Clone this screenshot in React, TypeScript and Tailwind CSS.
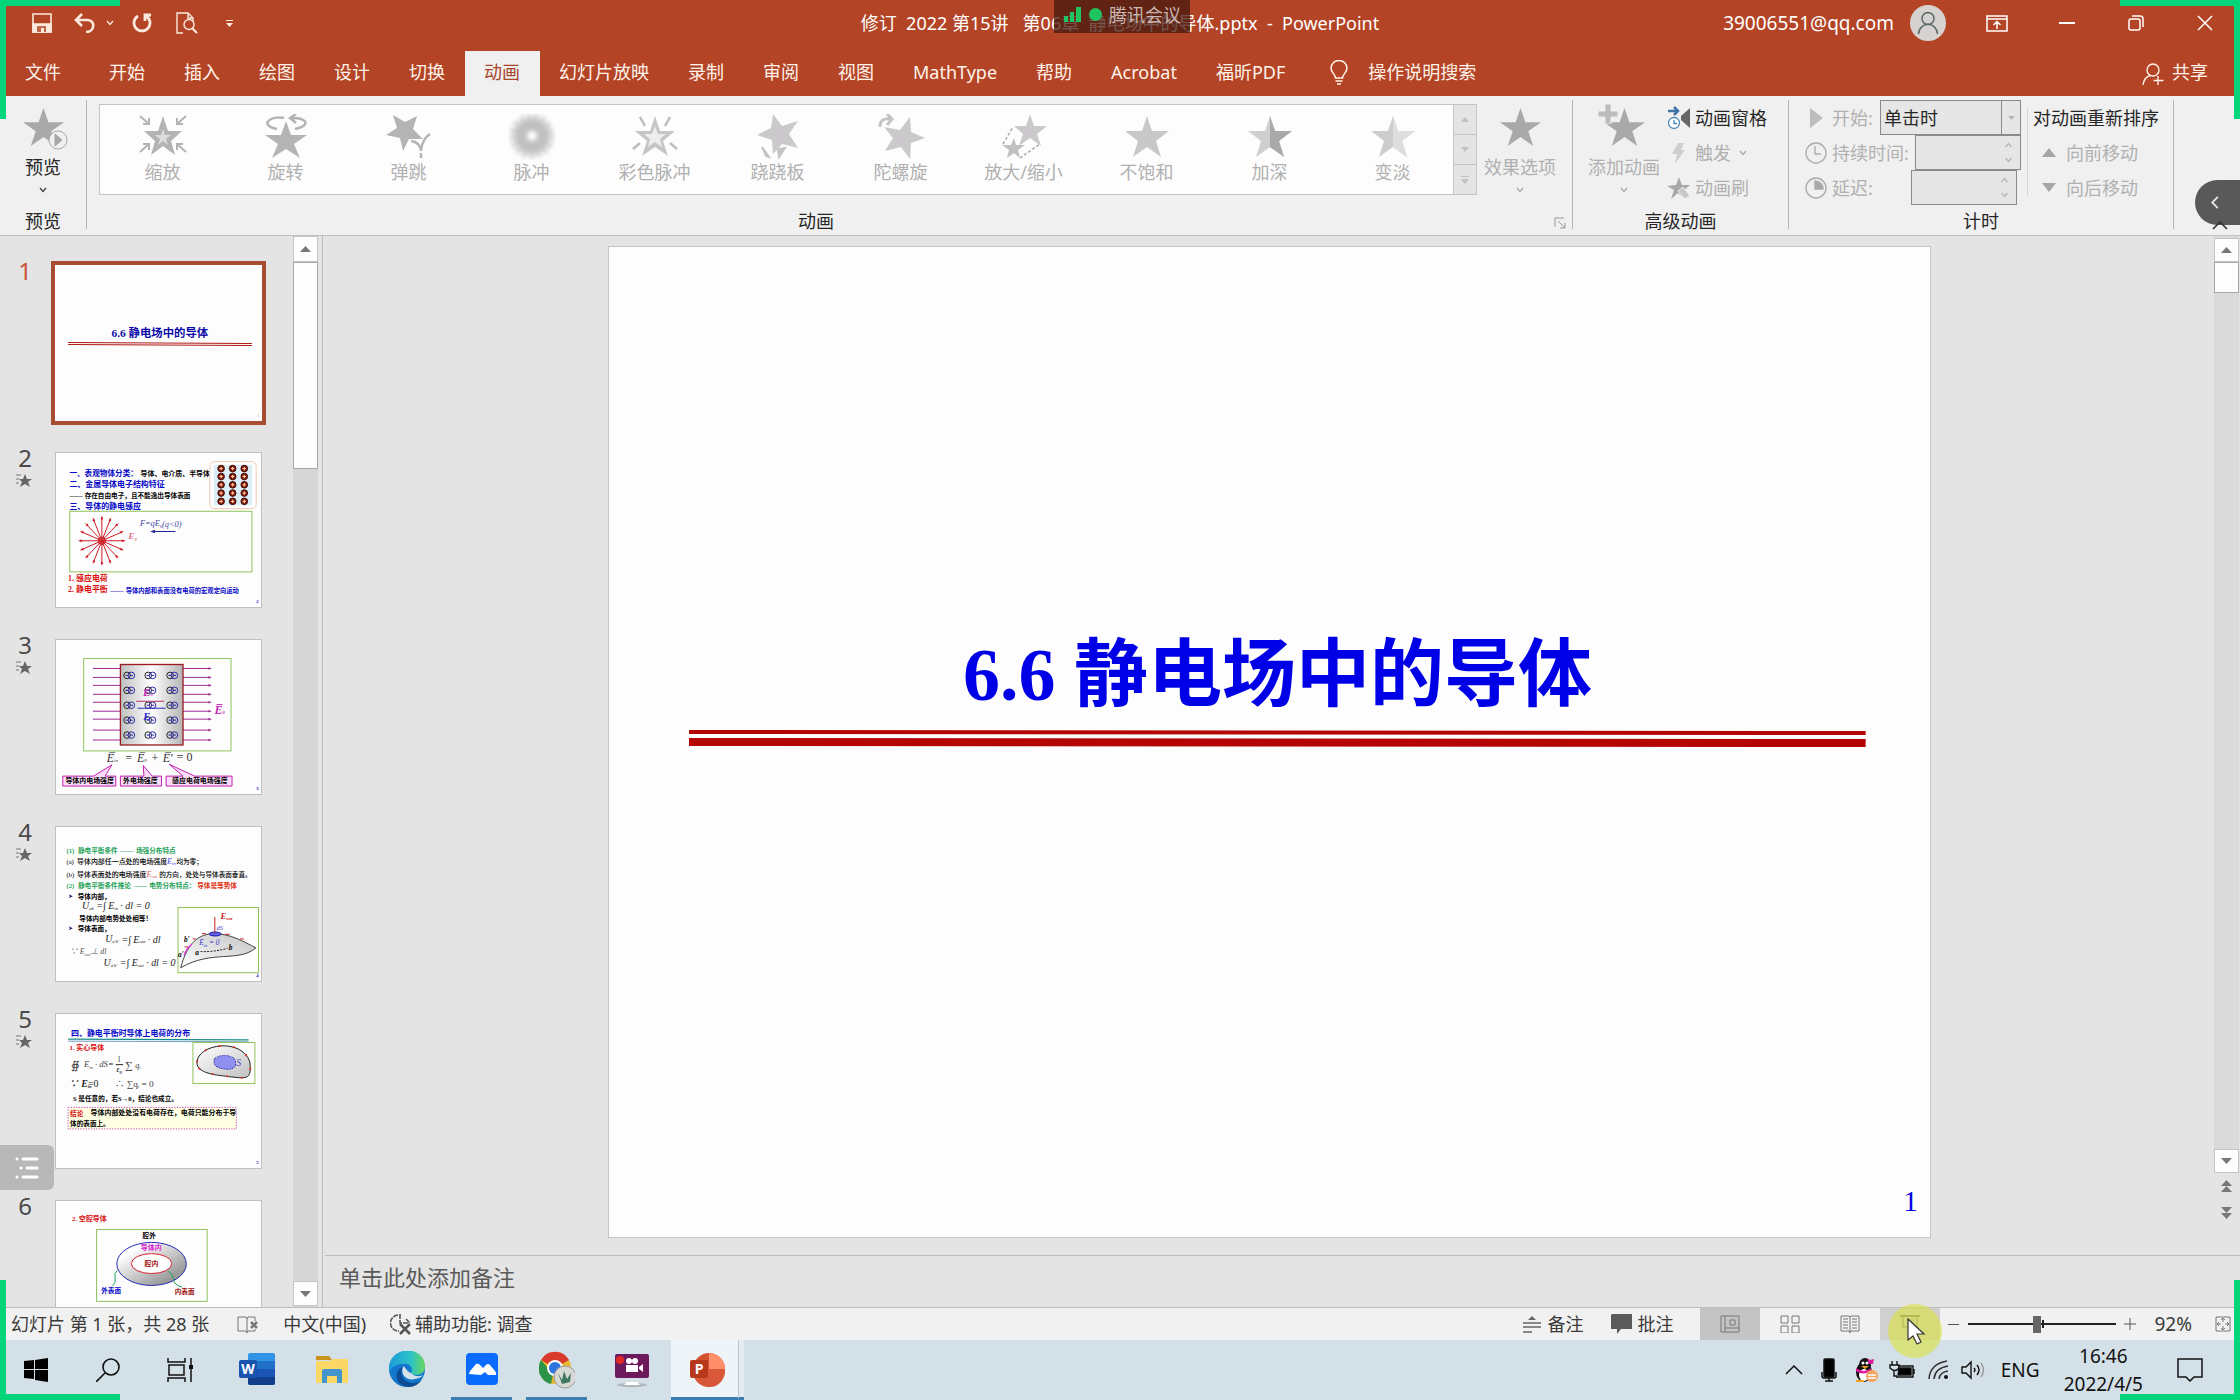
import type { ReactNode } from "react";

const TABS = ["开始", "插入", "绘图", "设计", "切换", "动画", "幻灯片放映", "录制", "审阅", "视图", "MathType", "帮助", "Acrobat", "福昕PDF"];

const STAR = "50,0 62,37 100,37 69,60 81,98 50,75 19,98 31,60 0,37 38,37";

function Star({ className = "h-[38px] w-[41px]", fill = "#a9a9a9" }: { className?: string; fill?: string }) {
  return (
    <svg viewBox="0 0 100 98" className={className} preserveAspectRatio="none">
      <polygon points={STAR} fill={fill} />
    </svg>
  );
}

function Chevron({ color = "#444", className = "h-[6px] w-[8px]" }: { color?: string; className?: string }) {
  return (
    <svg viewBox="0 0 8 6" className={className} fill="none" stroke={color} strokeWidth="1.3">
      <path d="M1 1l3 3.5L7 1" />
    </svg>
  );
}

function Triangle({ up, color = "#777", className = "h-[6px] w-[11px]" }: { up?: boolean; color?: string; className?: string }) {
  return (
    <svg viewBox="0 0 10 6" className={className} preserveAspectRatio="none">
      <path d={up ? "M0 6L5 0l5 6z" : "M0 0h10L5 6z"} fill={color} />
    </svg>
  );
}

/* ---------- title bar ---------- */

function TitleBar() {
  return (
    <header className="relative grid h-[46px] grid-cols-[1fr_auto_1fr] items-center text-white">
      <div className="flex items-center pl-8">
        <button aria-label="保存">
          <svg viewBox="0 0 20 20" className="h-5 w-5" fill="none" stroke="#fbe9dd" strokeWidth="1.6">
            <path d="M1 1h18v18H1z" />
            <path d="M1 11h18v8H1z" fill="#fbe9dd" />
            <path d="M6 19v-5h7v5M8 15v4" stroke="#b44426" />
          </svg>
        </button>
        <button aria-label="撤消" className="ml-[22px] flex items-center gap-[10px]">
          <svg viewBox="0 0 22 20" className="h-5 w-[22px]" fill="none" stroke="#fbe9dd" strokeWidth="2.6">
            <path d="M8 1L2 7l6 6M2 7h11c9 0 8 12-1 12" />
          </svg>
          <Chevron color="#fbe9dd" />
        </button>
        <button aria-label="重复" className="ml-[18px]">
          <svg viewBox="0 0 20 20" className="h-5 w-5" fill="none" stroke="#fbe9dd" strokeWidth="2.8">
            <path d="M6 3a8 8 0 1 0 8 0M19 2h-6v6" />
          </svg>
        </button>
        <button aria-label="打印预览" className="ml-6">
          <svg viewBox="0 0 22 22" className="h-[22px] w-[22px]" fill="none" stroke="#fbe9dd" strokeWidth="1.4">
            <path d="M7 21H1V1h11l5 5v3M12 1v5h5" />
            <circle cx="13" cy="12.500" r="5" />
            <path d="M16.500 16.500L21 21" strokeWidth="2.200" />
          </svg>
        </button>
        <button aria-label="自定义" className="ml-7 flex flex-col items-center gap-[2px]">
          <span className="h-px w-[7px] bg-[#fbe9dd]" />
          <Triangle color="#fbe9dd" className="h-[4px] w-[7px]" />
        </button>
      </div>
      <h1 className="whitespace-pre text-lg">修订  2022 第15讲   第06章  静电场中的导体.pptx  -  PowerPoint</h1>
      <div className="flex items-center justify-end pr-[27px]">
        <span className="text-[19px]">39006551@qq.com</span>
        <svg viewBox="0 0 36 36" className="ml-4 h-9 w-9" fill="none" stroke="#566" strokeWidth="1.500">
          <circle cx="18" cy="18" r="18" fill="#d5d2cf" stroke="none" />
          <circle cx="18" cy="13.500" r="6" />
          <path d="M8.500 29c1-13 18-13 19 0" />
        </svg>
        <button aria-label="功能区显示选项" className="ml-10">
          <svg viewBox="0 0 22 17" className="h-[17px] w-[22px]" fill="none" stroke="#fff" strokeWidth="1.500">
            <path d="M1 1h20v15H1zM1 4h20M11 14V7M7.500 10L11 6.500l3.500 3.500" />
          </svg>
        </button>
        <button aria-label="最小化" className="ml-[51px] h-[2px] w-4 bg-white" />
        <button aria-label="还原" className="ml-[53px]">
          <svg viewBox="0 0 16 16" className="h-4 w-4" fill="none" stroke="#fff" strokeWidth="1.500">
            <rect x="1" y="4" width="11" height="11" rx="2" />
            <path d="M4 1h8q3 0 3 3v8" />
          </svg>
        </button>
        <button aria-label="关闭" className="ml-[53px]">
          <svg viewBox="0 0 16 16" className="h-4 w-4" stroke="#fff" strokeWidth="1.500">
            <path d="M1 1l14 14M15 1L1 15" />
          </svg>
        </button>
      </div>
      <div className="absolute left-1/2 top-0 z-10 -ml-[66px] flex h-[33px] w-[136px] items-center gap-[7px] bg-[#45190f]/75 pb-1 pl-[10px] text-lg leading-none text-[#c9b8b2]">
        <svg viewBox="0 0 18 16" className="h-4 w-[18px]" fill="#1fc45e">
          <path d="M0 9h4v6H0zM6 5h4v10H6zM12 0h5v15h-5z" />
        </svg>
        <span className="h-[13px] w-[13px] rounded-full bg-[#1fc45e]" />
        腾讯会议
      </div>
    </header>
  );
}

function TabBar() {
  return (
    <nav className="flex h-[50px] items-stretch pl-[6px] text-lg text-[#fff3ea]">
      <button className="mr-[9px] pb-[3px] pl-[19px] pr-5 pt-[5px]">文件</button>
      {TABS.map((t) =>
        t === "动画" ? (
          <button key={t} className="mt-[5px] bg-[#f0f0f0] pb-[3px] pl-[19px] pr-5 text-[#a8452b]">{t}</button>
        ) : (
          <button key={t} className="pb-[3px] pl-[19px] pr-5 pt-[5px]">{t}</button>
        ),
      )}
      <button className="ml-[25px] flex items-center gap-5 pt-[2px]">
        <svg viewBox="0 0 18 25" className="h-[25px] w-[18px]" fill="none" stroke="#fff3ea" strokeWidth="1.500">
          <path d="M5.500 18c0-4-4.500-5-4.500-10a8 7.500 0 0 1 16 0c0 5-4.500 6-4.500 10zM5.500 21h7M7 24h4" />
        </svg>
        操作说明搜索
      </button>
      <button className="ml-auto mr-8 flex items-center gap-2 pt-[2px]">
        <svg viewBox="0 0 22 23" className="mt-1 h-[23px] w-[22px]" fill="none" stroke="#fff3ea" strokeWidth="1.400">
          <circle cx="11" cy="7" r="6" />
          <path d="M1 22c1-6 4-9 8-9.500M16 13v9M11.500 17.500h10" />
        </svg>
        共享
      </button>
    </nav>
  );
}

/* ---------- ribbon ---------- */

const EFFECTS: { name: string; art: ReactNode }[] = [
  {
    name: "缩放",
    art: (
      <>
        <polygon points="24,2 29,17 43,17 32,27 36,41 24,32 12,41 16,27 5,17 19,17" />
        <polygon points="24,15 26,21 32,21 27,25 29,31 24,27 19,31 21,25 16,21 22,21" fill="#dcdcdc" />
        <path d="M1 2l9 8M10 4v6H4M47 2l-9 8M38 4v6h6M1 38l9-8M10 36v-6H4M47 38l-9-8M38 36v-6h6" stroke="#b4b4b4" strokeWidth="2" fill="none" />
      </>
    ),
  },
  {
    name: "旋转",
    art: (
      <>
        <polygon points="24,7 29,21 45,21 32,30 38,44 24,35 10,44 16,30 3,21 19,21" />
        <path d="M15 15C-4 11 9 1 22 4M33 15c18-4 10-12-4-11M34 0l-6 4 6 5" fill="none" stroke="#b4b4b4" strokeWidth="2.500" />
      </>
    ),
  },
  {
    name: "弹跳",
    art: (
      <>
        <polygon points="8,1 20,8 32,2 28,15 38,25 24,25 18,37 15,24 1,21 12,14" />
        <path d="M26 27q9 1 10 10M36 37q1-12 9-17M36 39v5" fill="none" stroke="#b4b4b4" strokeWidth="2.500" />
      </>
    ),
  },
  {
    name: "脉冲",
    art: (
      <g className="blur-[2px]">
        <circle cx="24" cy="22" r="17" fill="#c0c0c0" />
        <circle cx="24" cy="22" r="19" fill="none" stroke="#c4c4c4" strokeWidth="6" strokeDasharray="4 3" />
        <circle cx="24" cy="22" r="5" fill="#fff" />
      </g>
    ),
  },
  {
    name: "彩色脉冲",
    art: (
      <>
        <polygon points="24,2 29,17 44,17 32,27 37,42 24,33 11,42 16,27 4,17 19,17" fill="#c6c6c6" />
        <polygon points="24,12 27,20 35,20 29,25 31,33 24,28 17,33 19,25 13,20 21,20" fill="#ededed" />
        <path d="M9 3l5 9M39 3l-5 9M2 35l7-6M46 35l-7-6" stroke="#bdbdbd" strokeWidth="2.500" />
      </>
    ),
  },
  {
    name: "跷跷板",
    art: (
      <>
        <polygon points="19,0 28,12 44,7 35,20 44,34 28,30 19,40 18,26 3,21 17,14" fill="#cbc9cb" />
        <path d="M8 33l7 10-3-1zM31 34l-6 9-1-8z" stroke="#c4c4c4" strokeWidth="2" fill="#c4c4c4" />
      </>
    ),
  },
  {
    name: "陀螺旋",
    art: (
      <>
        <polygon points="33,3 34,18 48,24 34,29 33,45 24,33 8,37 16,24 7,13 23,16" fill="#cbc9cb" />
        <path d="M3 13Q3 3 14 5M10 0l5 5-5 6" fill="none" stroke="#c4c4c4" strokeWidth="3" />
      </>
    ),
  },
  {
    name: "放大/缩小",
    art: (
      <>
        <polygon points="30,0 34,12 47,12 37,20 41,32 30,24 19,32 23,20 14,12 26,12" fill="#cbc9cb" />
        <polygon points="14,24 16,31 25,31 18,36 20,44 14,39 7,44 9,36 2,31 11,31" fill="#c0c0c0" />
        <path d="M3 30l10-17M20 44l20-14" stroke="#aaa" strokeDasharray="3 2" strokeWidth="1.500" />
      </>
    ),
  },
  {
    name: "不饱和",
    art: <polygon points="24,2 29,17 46,17 33,27 38,43 24,33 10,43 15,27 2,17 19,17" fill="#c9c8c9" />,
  },
  {
    name: "加深",
    art: (
      <>
        <polygon points="24,2 29,17 46,17 33,27 38,43 24,33 10,43 15,27 2,17 19,17" fill="#cfcfcf" />
        <polygon points="24,2 29,17 46,17 33,27 38,43 24,33" fill="#a9a9a9" />
      </>
    ),
  },
  {
    name: "变淡",
    art: (
      <>
        <polygon points="24,2 29,17 46,17 33,27 38,43 24,33 10,43 15,27 2,17 19,17" fill="#cdcdcd" />
        <polygon points="24,2 29,17 46,17 33,27 38,43 24,33" fill="#dedede" />
      </>
    ),
  },
];

function Group({ label, className = "", labelClass = "", children }: { label: string; className?: string; labelClass?: string; children: ReactNode }) {
  return (
    <section className={`relative mb-[6px] mt-1 flex shrink-0 flex-col border-r border-[#b5b5b5] ${className}`}>
      <div className="flex min-h-0 flex-1">{children}</div>
      <h2 className={`text-center text-lg leading-4 text-[#262626] ${labelClass}`}>{label}</h2>
    </section>
  );
}

function BigButton({ icon, label, dark }: { icon: ReactNode; label: string; dark?: boolean }) {
  return (
    <button className={`flex w-full flex-col items-center justify-start pt-2 text-lg leading-6 ${dark ? "text-[#262626]" : "text-[#b0b0b0]"}`}>
      {icon}
      <span className="mt-[9px]">{label}</span>
      <Chevron color={dark ? "#444" : "#aaa"} className="mt-2 h-[6px] w-[8px]" />
    </button>
  );
}

function Spin() {
  return (
    <span className="absolute right-2 top-0 flex h-full flex-col justify-center gap-[9px]">
      <Chevron color="#b5b5b5" className="h-[6px] w-[9px] rotate-180" />
      <Chevron color="#b5b5b5" className="h-[6px] w-[9px]" />
    </span>
  );
}

function Ribbon() {
  return (
    <div className="flex h-[140px] border-b border-[#c2c2c2] bg-[#f0f0f0]">
      <Group label="预览" className="w-[87px]">
        <BigButton
          dark
          label="预览"
          icon={
            <span className="relative">
              <Star />
              <svg viewBox="0 0 20 20" className="absolute -right-1 top-[22px] h-5 w-5" stroke="#a5a5a5">
                <circle cx="10" cy="10" r="9" fill="#f0f0f0" />
                <path d="M7 4l7 6-7 6z" fill="#a5a5a5" />
              </svg>
            </span>
          }
        />
      </Group>

      <Group label="动画" className="pl-3 pr-[9px]" labelClass="pr-[30px]">
        <div className="mt-1 flex h-[91px] border border-[#c4c4c4] bg-[#fdfdfd]">
          {EFFECTS.map((e) => (
            <button key={e.name} className="flex w-[123px] flex-col items-center pl-[2px] pt-[9px] text-lg leading-6 text-[#b0b0b0]">
              <svg viewBox="0 0 48 46" className="h-[46px] w-12" fill="#b4b4b4">{e.art}</svg>
              <span>{e.name}</span>
            </button>
          ))}
          <div className="flex w-[23px] flex-col divide-y divide-[#c4c4c4] border-l border-[#c4c4c4] bg-[#e4e4e4]">
            <button aria-label="上一行" className="flex flex-1 items-center justify-center"><Triangle up color="#c0c0c0" className="h-[5px] w-[8px]" /></button>
            <button aria-label="下一行" className="flex flex-1 items-center justify-center"><Triangle color="#c0c0c0" className="h-[5px] w-[8px]" /></button>
            <button aria-label="其他" className="flex flex-1 flex-col items-center justify-center gap-[2px]">
              <span className="h-px w-2 bg-[#c0c0c0]" />
              <Triangle color="#c0c0c0" className="h-[5px] w-[8px]" />
            </button>
          </div>
        </div>
        <div className="w-[86px]">
          <BigButton label="效果选项" icon={<Star />} />
        </div>
        <svg viewBox="0 0 12 12" className="absolute bottom-0 right-[6px] h-3 w-3" fill="none" stroke="#999">
          <path d="M1 10V1h9M4 4l7 7M11 6v5H6" />
        </svg>
      </Group>

      <Group label="高级动画" className="w-[216px]">
        <div className="ml-[11px] w-20 shrink-0">
          <BigButton
            label="添加动画"
            icon={
              <span className="relative">
                <Star />
                <svg viewBox="0 0 20 20" className="absolute -left-[6px] -top-1 h-5 w-5">
                  <path d="M7 0h6v7h7v6h-7v7H7v-7H0V7h7z" fill="#bcbcbc" stroke="#f0f0f0" strokeWidth="1" />
                </svg>
              </span>
            }
          />
        </div>
        <div className="ml-[3px] flex flex-col text-lg leading-6 text-[#b0b0b0]">
          <button className="flex h-[35px] items-center gap-1 text-[#262626]">
            <svg viewBox="0 0 24 24" className="h-6 w-6" fill="none" strokeWidth="2">
              <path d="M1 5h9M7 1l4 4-4 4" stroke="#3f74a8" strokeWidth="2.500" />
              <circle cx="7" cy="17" r="5.500" stroke="#4a86b8" strokeWidth="1.300" fill="#fff" />
              <path d="M7 14v3.500h3" stroke="#4a86b8" strokeWidth="1.300" />
              <path d="M23 2v20l-9-8v-4z" fill="#666" />
            </svg>
            动画窗格
          </button>
          <button className="flex h-[35px] items-center gap-1">
            <svg viewBox="0 0 24 24" className="h-6 w-6" fill="#cfcfcf"><path d="M11 2h6l-3 7h4L8 23l2-10H5z" /></svg>
            触发
            <Chevron color="#aaa" className="ml-1 h-[6px] w-[8px]" />
          </button>
          <button className="flex h-[35px] items-center gap-1">
            <svg viewBox="0 0 24 24" className="h-6 w-6" fill="#a8a8a8">
              <polygon points="12,1 15,9 23,9 17,14 19,23 11,17 4,23 7,14 0,10 9,9" />
              <path d="M11 15l5-4 7 9-5 3z" fill="#c8c8c8" stroke="#f0f0f0" />
            </svg>
            动画刷
          </button>
        </div>
      </Group>

      <Group label="计时" className="w-[385px]">
        <div className="ml-4 flex w-[216px] flex-col text-lg text-[#b0b0b0]">
          <div className="flex h-[35px] items-center">
            <svg viewBox="0 0 22 22" className="h-[22px] w-[22px]"><path d="M5 1l13 10L5 21z" fill="#bdbdbd" /></svg>
            <label htmlFor="start" className="ml-[5px]">开始:</label>
            <span className="relative ml-auto h-full w-[141px]">
              <select id="start" className="h-full w-full appearance-none border border-[#8a8a8a] bg-[#e6e6e6] pl-[3px] text-[#262626]">
                <option>单击时</option>
              </select>
              <span className="pointer-events-none absolute right-0 top-0 flex h-full w-5 items-center justify-center border-l border-[#8a8a8a]">
                <Triangle color="#b5b5b5" className="h-[4px] w-[7px]" />
              </span>
            </span>
          </div>
          <div className="flex h-[35px] items-center">
            <svg viewBox="0 0 22 22" className="h-[22px] w-[22px]" fill="none" stroke="#b0acae" strokeWidth="1.400">
              <circle cx="11" cy="11" r="10" />
              <path d="M10 4v8h6" />
            </svg>
            <label htmlFor="duration" className="ml-[5px]">持续时间:</label>
            <span className="relative ml-auto h-full">
              <input id="duration" className="h-full w-[106px] border border-[#8a8a8a] bg-[#e6e6e6]" />
              <Spin />
            </span>
          </div>
          <div className="flex h-[35px] items-center pr-1">
            <svg viewBox="0 0 22 22" className="h-[22px] w-[22px]" fill="none" stroke="#aaa" strokeWidth="1.400">
              <circle cx="11" cy="11" r="10" />
              <path d="M10 4v8h8q0-7-8-8z" fill="#aaa" />
            </svg>
            <label htmlFor="delay" className="ml-[5px]">延迟:</label>
            <span className="relative ml-auto h-full">
              <input id="delay" className="h-full w-[106px] border border-[#8a8a8a] bg-[#e6e6e6]" />
              <Spin />
            </span>
          </div>
        </div>
        <div className="ml-[6px] mt-2 flex h-[88px] border-l border-[#d5d5d5]" />
        <div className="ml-[5px] flex flex-col text-lg text-[#b0b0b0]">
          <span className="flex h-[35px] items-center text-[#262626]">对动画重新排序</span>
          <button className="flex h-[35px] items-center gap-[10px] pl-[9px]">
            <Triangle up color="#a5a5a5" className="h-[9px] w-[14px]" />
            向前移动
          </button>
          <button className="flex h-[35px] items-center gap-[10px] pl-[9px]">
            <Triangle color="#a5a5a5" className="h-[9px] w-[14px]" />
            向后移动
          </button>
        </div>
      </Group>

      <div className="relative flex-1">
        <button aria-label="展开侧栏" className="absolute right-0 top-[84px] flex h-[45px] w-[45px] items-center rounded-l-full bg-[#595959] pl-4">
          <svg viewBox="0 0 8 14" className="h-[13px] w-2" fill="none" stroke="#e5e5e5" strokeWidth="2"><path d="M7 1L1 7l6 6" /></svg>
        </button>
        <button aria-label="折叠功能区" className="absolute right-3 top-[124px]">
          <svg viewBox="0 0 16 10" className="h-[10px] w-4" fill="none" stroke="#333" strokeWidth="1.600"><path d="M1 9l7-7 7 7" /></svg>
        </button>
      </div>
    </div>
  );
}

/* ---------- slide thumbnails ---------- */

type TProps = { x: number; y: number; s?: number; c?: string; it?: boolean; mid?: boolean; w?: number; children: ReactNode };

function T({ x, y, s = 20, c = "#000", it, mid, w = 700, children }: TProps) {
  return (
    <text
      x={x}
      y={y}
      fontSize={s}
      fill={c}
      fontWeight={w}
      fontStyle={it ? "italic" : "normal"}
      textAnchor={mid ? "middle" : "start"}
      dominantBaseline="central"
      className="font-['Liberation_Serif','Noto_Sans_CJK_SC',serif]"
    >
      {children}
    </text>
  );
}

function Sub({ children }: { children: ReactNode }) {
  return <tspan fontSize="14" dy="7">{children}</tspan>;
}

function Back({ children }: { children: ReactNode }) {
  return <tspan dy="-7">{children}</tspan>;
}

const BLUE = "#0808c8";
const RED = "#dc1010";
const GREEN = "#1fa35a";
const BOX = "#8fc25a";
const MAG = "#c21fb0";

function Slide1() {
  return (
    <>
      <T x={313} y={202} s={34} c="#0a0aa8" mid>6.6 静电场中的导体</T>
      <path d="M39 231L588 234M39 237L588 240" stroke="#b01818" strokeWidth="3" />
      <T x={604} y={450} s={12} c="#88a" w={400}>1</T>
    </>
  );
}

function Slide2() {
  const rays = Array.from({ length: 16 }, (_, i) => (i * Math.PI) / 8);
  return (
    <>
      <T x={40} y={62} s={23} c={BLUE}>一、表观物体分类：</T>
      <T x={255} y={62} s={21}>导体、电介质、半导体</T>
      <T x={40} y={95} s={24} c={BLUE}>二、金属导体电子结构特征</T>
      <T x={40} y={129} s={20}>——</T>
      <T x={86} y={129} s={20}>存在自由电子，且不能逸出导体表面</T>
      <T x={40} y={162} s={24} c={BLUE}>三、导体的静电感应</T>
      <rect x="464" y="26" width="140" height="142" rx="14" fill="#fff" stroke="#f0c8b0" strokeWidth="3" />
      <rect x="476" y="36" width="116" height="122" fill="#dceff8" />
      {[498, 533, 568].map((x) =>
        [47, 71, 96, 121, 146].map((y) => (
          <g key={`${x}-${y}`}>
            <circle cx={x} cy={y} r="10" fill="#8c1a0c" stroke="#3c0a04" strokeWidth="3" />
            <path d={`M${x - 5} ${y}h10M${x} ${y - 5}v10`} stroke="#ffe0b0" strokeWidth="3" />
          </g>
        )),
      )}
      <rect x="41" y="176" width="550" height="183" fill="none" stroke={BOX} strokeWidth="3" />
      {rays.map((a) => {
        const ex = 138 + 70 * Math.cos(a);
        const ey = 265 + 74 * Math.sin(a);
        return (
          <g key={a} stroke="#cc1c24" fill="#cc1c24">
            <path d={`M138 265L${ex} ${ey}`} strokeWidth="3" />
            <circle cx={138 + 63 * Math.cos(a)} cy={265 + 67 * Math.sin(a)} r="3" />
          </g>
        );
      })}
      <circle cx="138" cy="265" r="10" fill="none" stroke="#cc1c24" strokeWidth="4" />
      <T x={218} y={252} s={28} c="#e0708a" it>E<Sub>0</Sub></T>
      <T x={253} y={214} s={25} c="#4444a8" it w={400}>F=qE<Sub>0</Sub><Back>(q&lt;0)</Back></T>
      <path d="M360 237H290" stroke="#202090" strokeWidth="3" />
      <path d="M284 237l14-5v10z" fill="#202090" />
      <T x={36} y={380} s={24} c={RED}>1. 感应电荷</T>
      <T x={36} y={411} s={24} c={RED}>2. 静电平衡</T>
      <T x={163} y={414} s={20} c={BLUE}>——</T>
      <T x={210} y={414} s={19} c={BLUE}>导体内部和表面没有电荷的宏观定向运动</T>
      <T x={604} y={449} s={14} c={BLUE}>2</T>
    </>
  );
}

function Slide3() {
  return (
    <>
      <defs>
        <linearGradient id="slab">
          <stop offset="0" stopColor="#c0c0c0" />
          <stop offset="0.5" stopColor="#fff" />
          <stop offset="1" stopColor="#b5b5b5" />
        </linearGradient>
      </defs>
      <rect x="83" y="56" width="445" height="279" fill="none" stroke={BOX} strokeWidth="3" />
      {[86, 113, 137, 164, 188, 215, 239, 272, 302].map((y) => (
        <g key={y}>
          <path d={`M111 ${y}h83M383 ${y}h80`} stroke="#9c2a92" strokeWidth="3" />
          <path d={`M470 ${y}l-10-4v8z`} fill="#9c2a92" />
        </g>
      ))}
      <rect x="194" y="74" width="189" height="243" fill="url(#slab)" stroke="#9a1c22" strokeWidth="4" />
      {[220, 284, 350].map((x) =>
        [107, 152, 197, 242, 287].map((y) => (
          <g key={`${x}-${y}`} fill="none" strokeWidth="3">
            <circle cx={x - 6} cy={y} r="10" stroke="#222" />
            <circle cx={x + 7} cy={y} r="10" stroke="#2828a8" />
            <path d={`M${x + 2} ${y}h10M${x - 11} ${y}h9`} stroke="#2828a8" />
          </g>
        )),
      )}
      <T x={262} y={156} s={34} c={MAG} it>E<Sub>0</Sub></T>
      <path d="M242 185h84" stroke="#b03070" strokeWidth="3" />
      <path d="M330 206h-84" stroke="#2828c0" strokeWidth="3" />
      <T x={263} y={231} s={32} c="#2828d8" it>E</T>
      <T x={478} y={211} s={36} c={MAG} it>E<Sub>0</Sub></T>
      <path d="M484 195h18" stroke={MAG} strokeWidth="3" />
      <T x={153} y={356} s={36} c="#333" it w={400}>E<Sub>in</Sub></T>
      <T x={209} y={356} s={36} c="#333" w={400}>=</T>
      <T x={244} y={356} s={36} c="#333" it w={400}>E<Sub>0</Sub></T>
      <T x={288} y={356} s={36} c="#333" w={400}>+</T>
      <T x={322} y={356} s={36} c="#333" it w={400}>E′</T>
      <T x={364} y={353} s={36} c="#333" w={400}>= 0</T>
      <path d="M160 340h18M251 340h18M329 340h18" stroke="#333" strokeWidth="2" />
      <g fill="#fadcf8" stroke={MAG} strokeWidth="3">
        <path d="M20 411h93l55-34-20 34h32v30H20z" />
        <path d="M194 411h71l-2-32 27 32h28v30H194z" />
        <path d="M332 411h51l-42-36 77 36h113v30H332z" />
      </g>
      <T x={28} y={426} s={21}>导体内电场强度</T>
      <T x={202} y={426} s={21}>外电场强度</T>
      <T x={350} y={426} s={21}>感应电荷电场强度</T>
      <T x={604} y={449} s={14} c={BLUE}>3</T>
    </>
  );
}

function Slide4() {
  return (
    <>
      <defs>
        <linearGradient id="surf" x1="0" y1="1" x2="1" y2="0">
          <stop offset="0" stopColor="#fff" />
          <stop offset="1" stopColor="#c4c4c4" />
        </linearGradient>
      </defs>
      <T x={31} y={72} c={GREEN}>(1)</T>
      <T x={66} y={72} c={GREEN}>静电平衡条件</T>
      <T x={193} y={72} c={GREEN}>——</T>
      <T x={241} y={72} c={GREEN}>场强分布特点</T>
      <T x={31} y={105} w={500}>(a)</T>
      <T x={63} y={105} w={500} s={21}>导体内部任一点处的电场强度</T>
      <T x={335} y={103} s={24} c="#4848d8" it w={400}>E<Sub>in</Sub></T>
      <T x={363} y={105} w={500}>均为零；</T>
      <T x={31} y={144} w={500}>(b)</T>
      <T x={63} y={144} w={500} s={21}>导体表面处的电场强度</T>
      <T x={273} y={142} s={24} c="#e06060" it w={400}>E<Sub>out</Sub></T>
      <T x={311} y={144} w={500}>的方向，处处与导体表面垂直。</T>
      <T x={31} y={177} c={GREEN}>(2)</T>
      <T x={66} y={177} c={GREEN}>静电平衡条件推论</T>
      <T x={235} y={177} c={GREEN}>——</T>
      <T x={281} y={177} c={GREEN}>电势分布特点：</T>
      <T x={426} y={177} c="#e03010">导体是等势体</T>
      <path d="M38 203l12 6-12 6 4-6zM38 300l12 6-12 6 4-6z" fill="#14146c" />
      <T x={65} y={209}>导体内部，</T>
      <T x={78} y={237} s={30} c="#222" it w={400}>U<Sub>ab</Sub><Back> =∫ E</Back><Sub>in</Sub><Back> · dl = 0</Back></T>
      <T x={70} y={275}>导体内部电势处处相等！</T>
      <T x={65} y={306}>导体表面，</T>
      <T x={148} y={338} s={30} c="#222" it w={400}>U<Sub>a′b′</Sub><Back> =∫ E</Back><Sub>out</Sub><Back> · dl</Back></T>
      <T x={41} y={375} s={24} c="#555" it w={400}>∵ E<Sub>out</Sub><Back>⊥ dl</Back></T>
      <T x={143} y={409} s={30} c="#222" it w={400}>U<Sub>a′b′</Sub><Back> =∫ E</Back><Sub>out</Sub><Back> · dl = 0</Back></T>
      <rect x="368" y="243" width="243" height="197" fill="#fff" stroke={BOX} strokeWidth="3" />
      <path d="M376 425C396 350 430 322 478 322S570 348 603 365C550 410 470 370 376 425z" fill="url(#surf)" stroke="#444" strokeWidth="3" />
      <ellipse cx="480" cy="323" rx="18" ry="6" fill="#6060e0" stroke="#1818b0" strokeWidth="3" />
      <path d="M479 318v-46" stroke="#c01818" strokeWidth="3" />
      <path d="M440 322h12M510 324h14M555 338h12M412 338h10M388 362h10" stroke="#d02020" strokeWidth="3" />
      <T x={496} y={268} s={26} c="#d02020" it>E<Sub>out</Sub></T>
      <T x={484} y={304} s={20} c="#4848d8" it w={400}>dS</T>
      <T x={432} y={350} s={22} c="#3838c8" it w={400}>E<Sub>in</Sub><Back> = 0</Back></T>
      <T x={386} y={342} s={22} it>b′</T>
      <T x={368} y={386} s={22} it>a′</T>
      <T x={420} y={380} s={22} it>a</T>
      <T x={521} y={366} s={22} it>b</T>
      <path d="M436 376q40 2 82-10" fill="none" stroke="#111" strokeWidth="3" strokeDasharray="6 4" />
      <path d="M386 388q8-24 24-34" fill="none" stroke="#d838d8" strokeWidth="4" />
      <T x={604} y={449} s={14} c={BLUE}>4</T>
    </>
  );
}

function Slide5() {
  return (
    <>
      <defs>
        <linearGradient id="blob" x1="0" y1="0" x2="1" y2="1">
          <stop offset="0" stopColor="#fff" />
          <stop offset="1" stopColor="#c0c0c0" />
        </linearGradient>
      </defs>
      <T x={45} y={59} s={24} c={BLUE}>四、静电平衡时导体上电荷的分布</T>
      <path d="M36 76L581 78" stroke="#1c8c8c" strokeWidth="4" />
      <path d="M36 82L581 84" stroke="#2470a0" strokeWidth="2" />
      <T x={40} y={104} s={21} c={RED}>1. 实心导体</T>
      <rect x="413" y="86" width="187" height="124" fill="none" stroke={BOX} strokeWidth="3" />
      <path d="M425 146C428 90 560 70 585 145C590 195 580 196 530 190C480 184 425 180 425 146z" fill="url(#blob)" stroke="#222" strokeWidth="3" />
      <path d="M425 146C428 90 560 70 585 145C590 195 580 196 530 190C480 184 425 180 425 146z" fill="none" stroke="#e02020" strokeWidth="5" strokeDasharray="6 38" />
      <path d="M478 134q30-18 60 0c12 24-2 36-30 32-30-4-34-14-30-32z" fill="#9090f0" stroke="#3030b0" strokeWidth="3" strokeDasharray="5 3" />
      <T x={544} y={146} s={30} c="#4848c8" it w={400}>S</T>
      <T x={46} y={154} s={32} c="#333" w={400}>∯</T>
      <T x={84} y={152} s={26} c="#444" it w={400}>E<Sub>in</Sub><Back> · dS</Back></T>
      <T x={158} y={152} s={26} c="#222">=</T>
      <T x={190} y={138} s={22} c="#333" mid w={400}>1</T>
      <path d="M180 153h22" stroke="#222" strokeWidth="3" />
      <T x={190} y={168} s={22} c="#333" it mid>ε<Sub>0</Sub></T>
      <T x={208} y={154} s={32} c="#333" w={400}>∑ <tspan fontStyle="italic" fontSize="24">q</tspan><Sub>i</Sub></T>
      <T x={38} y={211} s={30} c="#222" it>∵ E<Sub>in</Sub></T>
      <T x={96} y={211} s={30} c="#222" w={400}>=0</T>
      <T x={178} y={211} s={28} c="#444" w={400}>∴ ∑q<Sub>i</Sub><Back> = 0</Back></T>
      <T x={51} y={256} s={20}>S 是任意的，若S→0，结论也成立。</T>
      <rect x="36" y="282" width="508" height="65" fill="#ffffe4" stroke="#d050b8" strokeWidth="3" strokeDasharray="4 4" />
      <T x={42} y={300} s={20} c={RED}>结论</T>
      <T x={104} y={300} s={21}>导体内部处处没有电荷存在，电荷只能分布于导</T>
      <T x={42} y={330} s={20}>体的表面上。</T>
      <T x={604} y={449} s={14} c={BLUE}>5</T>
    </>
  );
}

function Slide6() {
  return (
    <>
      <defs>
        <linearGradient id="shell" x1="0" y1="0" x2="1" y2="1">
          <stop offset="0.2" stopColor="#fff" />
          <stop offset="0.8" stopColor="#9a9a9a" />
        </linearGradient>
      </defs>
      <T x={48} y={54} s={21} c={RED}>2. 空腔导体</T>
      <rect x="122" y="86" width="334" height="217" fill="none" stroke={BOX} strokeWidth="3" />
      <ellipse cx="288" cy="190" rx="105" ry="65" fill="url(#shell)" stroke="#2828b0" strokeWidth="3" />
      <ellipse cx="288" cy="189" rx="61" ry="30" fill="#fff" stroke="#d82030" strokeWidth="3" />
      <T x={281} y={105} mid>腔外</T>
      <T x={287} y={143} s={21} c="#d818d0" mid>导体内</T>
      <T x={288} y={189} s={21} c="#a01010" mid>腔内</T>
      <T x={166} y={270} c={BLUE} mid>外表面</T>
      <T x={388} y={273} c="#a01010" mid>内表面</T>
      <path d="M170 256q12-10 8-24t6-22M338 212q14 6 16 24t26 24" fill="none" stroke="#18a060" strokeWidth="3" />
    </>
  );
}

const SLIDES = [<Slide1 />, <Slide2 />, <Slide3 />, <Slide4 />, <Slide5 />, <Slide6 />];

function ThumbRow({ n, art }: { n: number; art: ReactNode }) {
  const active = n === 1;
  const animated = n > 1 && n < 6;
  return (
    <li className="flex h-[187px] shrink-0">
      <div className="flex w-8 flex-col items-end">
        <span className={`text-2xl leading-3 ${active ? "text-[#c85234]" : "text-[#4a4a4a]"}`}>{n}</span>
        {animated && (
          <svg viewBox="0 0 16 13" className="mt-[10px] h-[13px] w-4">
            <polygon points="9,0 11,5 16,5 12,8 14,13 9,10 4,13 6,8 3,5 7,5" fill="#666" />
            <path d="M0 1h5M0 5h3M0 9h3" stroke="#777" />
          </svg>
        )}
      </div>
      <button
        aria-label={`幻灯片 ${n}`}
        className={`ml-[23px] h-[156px] w-[207px] bg-[#fdfdfd] ${active ? "ring-4 ring-[#a84c32]" : "border border-[#c0c0c0]"}`}
      >
        <svg viewBox="0 0 618 465" className="h-full w-full">{art}</svg>
      </button>
    </li>
  );
}

function ThumbPanel() {
  return (
    <aside className="relative flex w-[323px] shrink-0 border-r border-[#bdbdbd]">
      <ol className="flex min-h-0 flex-1 flex-col overflow-hidden pt-[29px]">
        {SLIDES.map((art, i) => (
          <ThumbRow key={i} n={i + 1} art={art} />
        ))}
      </ol>
      <div className="mr-1 flex w-[25px] flex-col bg-[#d6d6d6] text-[#777]">
        <button aria-label="向上滚动" className="flex h-[26px] items-center justify-center border border-[#c4c4c4] bg-[#fdfdfd]"><Triangle up /></button>
        <div className="h-[207px] border border-[#a8a8a8] bg-[#fdfdfd]" />
        <button aria-label="向下滚动" className="mb-[1px] mt-auto flex h-[25px] items-center justify-center border border-[#c4c4c4] bg-[#fdfdfd]"><Triangle /></button>
      </div>
      <button aria-label="目录" className="absolute bottom-[117px] left-0 flex h-[45px] w-[54px] items-center rounded-r-md bg-[#b3b3b3]/90 pl-[15px]">
        <svg viewBox="0 0 24 22" className="h-[22px] w-6" stroke="#fff" strokeWidth="3" strokeLinecap="round">
          <path d="M2 2h0M8 2h14M6 11h0M12 11h10M2 20h0M8 20h14" />
        </svg>
      </button>
    </aside>
  );
}

/* ---------- editor ---------- */

function Editor() {
  return (
    <main className="flex min-w-0 flex-1 flex-col">
      <div className="flex min-h-0 flex-1">
        <div className="flex min-w-0 flex-1 justify-center pb-[17px] pl-[2px] pt-[10px]">
          <article className="relative aspect-[4/3] h-full border border-[#c4c4c4] bg-[#fdfdfd] pl-20 pr-16 pt-[390px] font-['Liberation_Serif','Noto_Sans_CJK_SC',serif] text-[#0000e6]">
            <h2 className="text-center text-[74px] font-bold leading-[76px]">6.6 静电场中的导体</h2>
            <svg viewBox="0 0 1176 18" preserveAspectRatio="none" className="mt-4 h-[18px] w-full" fill="#b40404">
              <path d="M0 1l1176 1v4L0 5zM0 9l1176 1v8L0 17z" />
            </svg>
            <span className="absolute bottom-5 right-3 text-[29px] leading-8">1</span>
          </article>
        </div>
        <div className="mr-px flex w-[25px] flex-col bg-[#dadada] pt-[2px]">
          <button aria-label="向上滚动" className="flex h-6 items-center justify-center border border-[#c4c4c4] bg-[#fdfdfd]"><Triangle up /></button>
          <div className="h-[31px] border border-[#a8a8a8] bg-[#fdfdfd]" />
          <button aria-label="向下滚动" className="mt-auto flex h-6 items-center justify-center border border-[#c4c4c4] bg-[#fdfdfd]"><Triangle /></button>
          <div className="flex h-[82px] flex-col items-center gap-[15px] bg-[#e4e4e4] pt-[7px]">
            <button aria-label="上一张幻灯片"><Triangle up /><Triangle up /></button>
            <button aria-label="下一张幻灯片"><Triangle /><Triangle /></button>
          </div>
        </div>
      </div>
      <div className="ml-[2px] h-[52px] border-t border-[#bdbdbd] pl-[14px] pt-[5px] text-[22px] leading-8 text-[#5a5a5a]">单击此处添加备注</div>
    </main>
  );
}

/* ---------- status bar ---------- */

function StatusBar() {
  return (
    <footer className="flex h-[33px] items-center border-t border-[#bdbdbd] bg-[#f1f1f1] pl-[11px] pr-[9px] text-lg leading-none text-[#3a3a3a]">
      <span>幻灯片 第 1 张，共 28 张</span>
      <button aria-label="拼写检查" className="ml-7">
        <svg viewBox="0 0 22 19" className="h-[19px] w-[22px]" fill="none" stroke="#777">
          <path d="M1 2h8l1 2 1-2h7v4M1 2v14h8l1 2 1-2h7v-2M10 4v13" />
          <path d="M14 7l6 6M20 7l-6 6" strokeWidth="2.500" />
        </svg>
      </button>
      <button className="ml-6">中文(中国)</button>
      <button className="ml-6 flex items-center gap-[3px]">
        <svg viewBox="0 0 22 22" className="h-[22px] w-[22px]" fill="none" stroke="#555" strokeWidth="1.600">
          <path d="M8 2a8 8 0 0 0 1 16M10 1v9h9M16 6l4 4" strokeDasharray="5 1" />
          <path d="M10 11l10 10M20 11L10 21" strokeWidth="2.500" />
        </svg>
        辅助功能: 调查
      </button>

      <button className="ml-auto flex items-center gap-[6px]">
        <svg viewBox="0 0 18 18" className="h-[18px] w-[18px]" stroke="#666" strokeWidth="1.300">
          <path d="M5 5l4-4 4 4z" fill="#666" stroke="none" />
          <path d="M0 8h18M0 12h18M0 17h9" />
        </svg>
        备注
      </button>
      <button className="ml-7 flex items-center gap-1">
        <svg viewBox="0 0 22 20" className="h-5 w-[22px]" fill="#5a5a5a"><path d="M1 0h20v15H10l-4 5v-5H0V1z" /></svg>
        批注
      </button>
      <div className="ml-[27px] flex h-full">
        <button aria-label="普通视图" className="flex w-[60px] items-center justify-center bg-[#c4c4c4]">
          <svg viewBox="0 0 20 18" className="h-[18px] w-5" fill="none" stroke="#777"><path d="M1 1h18v16H1zM5 1v16M5 13h14M10 5h5v5h-5z" /></svg>
        </button>
        <button aria-label="幻灯片浏览" className="flex w-[60px] items-center justify-center">
          <svg viewBox="0 0 20 18" className="h-[18px] w-5" fill="none" stroke="#777"><path d="M1 1h7v7H1zM12 1h7v7h-7zM1 11h7v7H1zM12 11h7v7h-7z" /></svg>
        </button>
        <button aria-label="阅读视图" className="flex w-[60px] items-center justify-center">
          <svg viewBox="0 0 20 18" className="h-[18px] w-5" fill="none" stroke="#777"><path d="M1 1h8l1 1 1-1h8v15h-8l-1 2-1-2H1zM10 2v15M3 4h5M3 7h5M3 10h5M3 13h5M12 4h5M12 7h5M12 10h5M12 13h5" /></svg>
        </button>
        <button aria-label="幻灯片放映" className="relative flex w-[60px] items-center justify-center bg-[#d0d0d0]">
          <svg viewBox="0 0 20 18" className="h-[18px] w-5" fill="none" stroke="#777"><path d="M0 1h20" strokeWidth="2" /><path d="M3 2v10h14V2M7 5h7M7 8h7" /></svg>
          <span className="absolute left-2 top-[-4px] z-20 h-[54px] w-[54px] rounded-full bg-[#dce23c]/60" />
          <svg viewBox="0 0 18 27" className="absolute left-[27px] top-[10px] z-20 h-[27px] w-[18px]">
            <path d="M1 1v21l5-4 4 8 4-2-4-8h7z" fill="#fff" stroke="#333" strokeWidth="1.200" />
          </svg>
        </button>
      </div>
      <button aria-label="缩小" className="ml-2 h-px w-[11px] bg-[#555]" />
      <div className="relative ml-[9px] flex items-center">
        <input
          type="range"
          aria-label="显示比例"
          defaultValue={46}
          className="h-[2px] w-[148px] appearance-none bg-[#222] [&::-webkit-slider-thumb]:h-[17px] [&::-webkit-slider-thumb]:w-2 [&::-webkit-slider-thumb]:appearance-none [&::-webkit-slider-thumb]:bg-[#666]"
        />
        <span className="absolute left-1/2 h-2 w-[2px] bg-[#222]" />
      </div>
      <button aria-label="放大" className="ml-2">
        <svg viewBox="0 0 12 12" className="h-3 w-3" stroke="#555"><path d="M6 0v12M0 6h12" /></svg>
      </button>
      <span className="ml-[18px] text-[19px]">92%</span>
      <button aria-label="适应窗口" className="ml-[23px]">
        <svg viewBox="0 0 16 16" className="h-4 w-4" fill="none" stroke="#777"><path d="M1 1h14v14H1zM8 2v4M8 10v4M2 8h4M10 8h4M6 4l2-2 2 2M6 12l2 2 2-2M4 6L2 8l2 2M12 6l2 2-2 2" /></svg>
      </button>
    </footer>
  );
}

/* ---------- taskbar ---------- */

const APPS: { name: string; running?: boolean; art: ReactNode }[] = [
  {
    name: "Word",
    art: (
      <>
        <rect x="9" y="2" width="27" height="32" rx="2" fill="#2f94e6" />
        <path d="M9 10h27v8H9z" fill="#2070c8" />
        <path d="M9 18h27v8H9z" fill="#1a54b4" />
        <path d="M9 26h27v6q0 2-2 2H11q-2 0-2-2z" fill="#123c8c" />
        <rect x="0" y="9" width="18" height="18" rx="2" fill="#1853ae" />
        <text x="9" y="23" textAnchor="middle" fontSize="14" fontWeight="700" fill="#fff">W</text>
      </>
    ),
  },
  {
    name: "文件资源管理器",
    art: (
      <>
        <path d="M2 5h13l3 4H2z" fill="#c8941c" />
        <path d="M2 10h14l3-2h15v24H2z" fill="#fbd767" />
        <path d="M8 20q0-2 2-2h16q2 0 2 2v12h-5v-7H13v7H8z" fill="#4295cc" />
      </>
    ),
  },
  {
    name: "Edge",
    art: (
      <>
        <defs>
          <linearGradient id="edgeTop">
            <stop offset="0" stopColor="#1c9bd8" />
            <stop offset="0.6" stopColor="#2cc3c8" />
            <stop offset="1" stopColor="#66d85a" />
          </linearGradient>
        </defs>
        <circle cx="18" cy="18" r="18" fill="#1478cc" />
        <path d="M0 16C2-6 36-6 36 16c0 8-10 10-14 6 3-6-2-10-8-9C8 13 2 15 0 22z" fill="url(#edgeTop)" />
        <path d="M14 16c-4 6 0 16 10 16 4 0 7-2 9-4-4 8-14 10-20 6C5 30 6 18 14 16z" fill="#0d4c94" />
        <path d="M22 22c-6-2-6-8-8-6-3 8 4 14 12 12 4-1 7-2 8-4-4 2-8 2-12-2z" fill="#d6e2ea" />
      </>
    ),
  },
  {
    name: "腾讯会议",
    running: true,
    art: (
      <>
        <rect x="2" y="2" width="32" height="32" rx="4" fill="#0a6cff" />
        <path d="M5 23l8-9 4 4-4 5z" fill="#b8d4ff" />
        <path d="M5 23q0-2 2-4l5-6q2-1 4 1l3 3 3-3q2-2 4 0l5 6q2 2 1 4h-8l-3-3-4 3z" fill="#fff" />
      </>
    ),
  },
  {
    name: "Chrome",
    running: true,
    art: (
      <>
        <circle cx="16" cy="17" r="16" fill="#e8b92c" />
        <path d="M16 17L2 9a16 16 0 0 1 28 0z" fill="#d93a2c" />
        <path d="M2 9l12 14-2 10A16 16 0 0 1 2 9z" fill="#2c9448" />
        <circle cx="16" cy="17" r="8" fill="#fff" />
        <circle cx="16" cy="17" r="6" fill="#2c74e0" />
        <circle cx="26" cy="26" r="11" fill="#d8d8d4" stroke="#999" />
        <path d="M19 22l4 7 2-9 3 8 4-6-1 9-8 2z" fill="#3e7860" />
      </>
    ),
  },
  {
    name: "录屏",
    art: (
      <>
        <rect x="1" y="3" width="34" height="24" rx="2" fill="#6c1a5c" />
        <circle cx="6" cy="9" r="4" fill="#e02828" />
        <circle cx="15" cy="10" r="3" fill="#fff" />
        <circle cx="21" cy="10" r="3" fill="#fff" />
        <path d="M12 14h12v7H12zM25 16l4-3v8l-4-3z" fill="#fff" />
        <ellipse cx="18" cy="34" rx="15" ry="2" fill="#b0b8bc" />
        <path d="M13 31h10l3 3H10z" fill="#fff" />
      </>
    ),
  },
];

function Taskbar() {
  return (
    <div className="relative flex h-[60px] bg-[#d4e0e8]">
      <button aria-label="开始" className="flex w-[72px] items-center justify-center">
        <svg viewBox="0 0 24 24" className="h-6 w-6"><path d="M0 3l10-1v9H0zM11 2l13-2v11H11zM0 12h10v9L0 20zM11 12h13v12l-13-2z" /></svg>
      </button>
      <button aria-label="搜索" className="flex w-[72px] items-center justify-center">
        <svg viewBox="0 0 24 24" className="h-6 w-6" fill="none" stroke="#111" strokeWidth="1.600"><circle cx="15" cy="9" r="8" /><path d="M9 15l-9 9" /></svg>
      </button>
      <button aria-label="任务视图" className="flex w-[72px] items-center justify-center">
        <svg viewBox="0 0 26 24" className="h-6 w-[26px]" fill="none" stroke="#111" strokeWidth="1.500"><path d="M1 0v4h17V0M1 24v-4h17v4M2 7h15v10H2zM24 0v24" /><path d="M24 7v4" strokeWidth="4" /></svg>
      </button>
      <div className="ml-[3px] flex">
        {APPS.map((a) => (
          <button key={a.name} aria-label={a.name} className="relative flex w-[75px] items-center justify-center">
            <svg viewBox="0 0 36 38" className="h-[38px] w-9">{a.art}</svg>
            {a.running && <span className="absolute bottom-0 left-[7px] h-[3px] w-[61px] bg-[#3a7fb0]" />}
          </button>
        ))}
        <button aria-label="PowerPoint" className="ml-[2px] flex w-[67px] items-center justify-center border-b-[3px] border-[#3a7fb0] bg-[#eef4f7] pl-1">
          <svg viewBox="0 0 36 36" className="h-9 w-9">
            <circle cx="20" cy="18" r="16" fill="#d35230" />
            <path d="M20 2a16 16 0 0 1 16 16H20z" fill="#ff8f6b" />
            <path d="M20 18h16a16 16 0 0 1-32 4z" fill="#d9583a" />
            <rect x="1" y="9" width="18" height="18" rx="2" fill="#b7391c" />
            <text x="10" y="23" textAnchor="middle" fontSize="14" fontWeight="700" fill="#fff">P</text>
          </svg>
        </button>
        <span className="w-[6px] border-b-[3px] border-l border-b-[#3a7fb0] border-l-[#b4c4d0] bg-[#e4ecf1]" />
      </div>

      <div className="ml-auto flex items-center pr-[37px] text-[19px] text-[#111]">
        <svg viewBox="0 0 18 10" className="h-[10px] w-[18px]" fill="none" stroke="#111" strokeWidth="1.500"><path d="M1 9l8-8 8 8" /></svg>
        <svg viewBox="0 0 16 24" className="ml-[18px] h-6 w-4" fill="none" stroke="#111" strokeWidth="1.500">
          <rect x="3" y="1" width="10" height="18" rx="1" fill="#000" />
          <path d="M1 14v4q0 2 2 2h10q2 0 2-2v-4M8 20v3M4 23h8" />
        </svg>
        <svg viewBox="0 0 24 24" className="ml-[18px] h-6 w-6">
          <ellipse cx="9" cy="14" rx="8" ry="10" fill="#111" />
          <ellipse cx="10" cy="7" rx="6" ry="7" fill="#111" />
          <ellipse cx="9" cy="17" rx="5" ry="6" fill="#fff" />
          <circle cx="8" cy="5" r="1.500" fill="#fff" />
          <circle cx="12" cy="5" r="1.500" fill="#fff" />
          <path d="M1 10q8 6 15 0v3q-8 5-15 0zM12 0l3 2 4-1-1 5-4 0z" fill="#e21aa0" />
          <path d="M6 8h8l-4 3zM1 22h8v2H1z" fill="#f0a020" />
          <circle cx="17" cy="18" r="6" fill="#f3a45c" />
          <path d="M13 17h8M13 20h8" stroke="#fff" strokeWidth="1.300" />
        </svg>
        <svg viewBox="0 0 26 18" className="ml-[10px] h-[18px] w-[26px]" fill="none" stroke="#111" strokeWidth="1.400">
          <path d="M3 0v4M8 0v4M1 4h9v3q-4 5-9 0zM5 10v5h3M9 5h15v11H7M25 8v5" />
          <path d="M10 7h12v7H9z" fill="#000" />
        </svg>
        <svg viewBox="0 0 22 20" className="ml-[13px] h-5 w-[22px]" fill="none" stroke="#333" strokeWidth="1.500">
          <path d="M1 19Q2 4 19 1M6 19Q7 8 20 6M11 19q1-7 9-8" />
          <circle cx="18" cy="17" r="2" fill="#111" stroke="none" />
        </svg>
        <svg viewBox="0 0 24 20" className="ml-[11px] h-5 w-6" fill="none" stroke="#111" strokeWidth="1.400">
          <path d="M1 7v6h4l5 5V2L5 7zM13 8q2 2 0 4M16 5q4 5 0 10" />
          <path d="M20 3q5 7 0 14" stroke="#999" />
        </svg>
        <span className="ml-4">ENG</span>
        <time className="ml-6 text-center leading-7">16:46<br />2022/4/5</time>
        <svg viewBox="0 0 26 24" className="ml-[34px] h-6 w-[26px]" fill="none" stroke="#111" strokeWidth="1.500"><path d="M1 1h24v18h-8l-4 4-4-4H1z" /></svg>
      </div>
    </div>
  );
}

/* green corners of the shared area */
function ShareFrame() {
  return (
    <div className="pointer-events-none absolute inset-0 z-30">
      <div className="absolute left-0 top-0 h-[119px] w-[120px] border-l-[6px] border-t-[6px] border-[#05d57a]" />
      <div className="absolute right-0 top-0 h-[119px] w-[120px] border-r-[6px] border-t-[6px] border-[#05d57a]" />
      <div className="absolute bottom-0 left-0 h-[120px] w-[120px] border-b-[6px] border-l-[6px] border-[#05d57a]" />
      <div className="absolute bottom-0 right-0 h-[120px] w-[120px] border-b-[6px] border-r-[6px] border-[#05d57a]" />
    </div>
  );
}

export default function App() {
  return (
    <div className="relative flex h-screen flex-col overflow-hidden whitespace-nowrap bg-[#e4e4e4] font-['Noto_Sans','Noto_Sans_CJK_SC',sans-serif]">
      <div className="bg-[#b44426]">
        <TitleBar />
        <TabBar />
      </div>
      <Ribbon />
      <div className="flex min-h-0 flex-1">
        <ThumbPanel />
        <Editor />
      </div>
      <StatusBar />
      <Taskbar />
      <ShareFrame />
    </div>
  );
}
